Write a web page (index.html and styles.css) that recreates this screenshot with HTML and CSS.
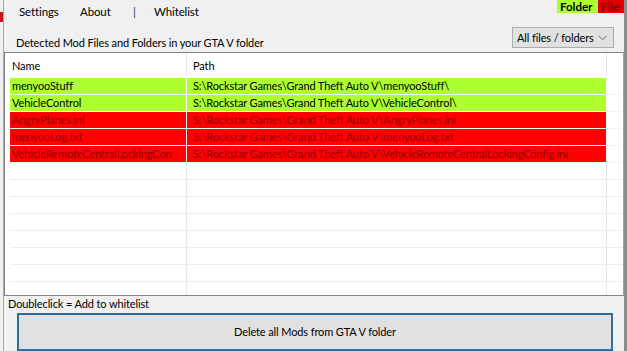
FILE: index.html
```html
<!DOCTYPE html>
<html>
<head>
<meta charset="utf-8">
<link rel="stylesheet" href="styles.css">
</head>
<body>
<div class="window">
  <div class="edge-left"><span class="red-mark"></span></div>
  <div class="main">
    <div class="menubar">
      <span class="menu-item w-settings">Settings</span>
      <span class="menu-item w-about">About</span>
      <span class="menu-item w-sep">|</span>
      <span class="menu-item">Whitelist</span>
      <div class="legend"><span class="lg-folder">Folder</span><span class="lg-file">File</span></div>
    </div>
    <div class="toolbar">
      <span class="caption">Detected Mod Files and Folders in your GTA V folder</span>
      <div class="select">
        <span class="select-text">All files / folders</span>
        <svg class="chevron" width="9" height="6" viewBox="0 0 9 6"><path d="M0.5 0.8 L4.5 4.8 L8.5 0.8" fill="none" stroke="#6d6d6d" stroke-width="1"/></svg>
      </div>
    </div>
    <div class="list">
      <div class="row header"><div class="c1">Name</div><div class="c2">Path</div><div class="c3"></div></div>
      <div class="row folder"><div class="c1">menyooStuff</div><div class="c2">S:\Rockstar Games\Grand Theft Auto V\menyooStuff\</div><div class="c3"></div></div>
      <div class="row folder"><div class="c1">VehicleControl</div><div class="c2">S:\Rockstar Games\Grand Theft Auto V\VehicleControl\</div><div class="c3"></div></div>
      <div class="row file"><div class="c1">AngryPlanes.ini</div><div class="c2">S:\Rockstar Games\Grand Theft Auto V\AngryPlanes.ini</div><div class="c3"></div></div>
      <div class="row file"><div class="c1">menyooLog.txt</div><div class="c2">S:\Rockstar Games\Grand Theft Auto V\menyooLog.txt</div><div class="c3"></div></div>
      <div class="row file"><div class="c1">VehicleRemoteCentralLockingCon</div><div class="c2">S:\Rockstar Games\Grand Theft Auto V\VehicleRemoteCentralLockingConfig.ini</div><div class="c3"></div></div>
      <div class="row"><div class="c1"></div><div class="c2"></div><div class="c3"></div></div>
      <div class="row"><div class="c1"></div><div class="c2"></div><div class="c3"></div></div>
      <div class="row"><div class="c1"></div><div class="c2"></div><div class="c3"></div></div>
      <div class="row"><div class="c1"></div><div class="c2"></div><div class="c3"></div></div>
      <div class="row"><div class="c1"></div><div class="c2"></div><div class="c3"></div></div>
      <div class="row"><div class="c1"></div><div class="c2"></div><div class="c3"></div></div>
      <div class="row"><div class="c1"></div><div class="c2"></div><div class="c3"></div></div>
      <div class="row"><div class="c1"></div><div class="c2"></div><div class="c3"></div></div>
    </div>
    <div class="hint">Doubleclick = Add to whitelist</div>
    <div class="btn-wrap"><button class="btn">Delete all Mods from GTA V folder</button></div>
  </div>
  <div class="edge-right"></div>
</div>
</body>
</html>
```
FILE: styles.css
```css
html, body {
  margin: 0;
  padding: 0;
  background: #f0f0f0;
}
body {
  font-family: Lato, "Liberation Sans", sans-serif;
  font-size: 11px;
  letter-spacing: -0.12px;
  color: #000;
}
.window {
  width: 627px;
  height: 351px;
  display: flex;
  overflow: hidden;
  background: #f0f0f0;
}
.edge-left {
  width: 3px;
  flex: none;
  display: flex;
  flex-direction: column;
}
.red-mark {
  display: block;
  margin-top: 12px;
  height: 10px;
  width: 3px;
  background: #c4161c;
}
.main {
  flex: 1;
  min-width: 0;
  border-left: 1px solid #a9a9a9;
  display: flex;
  flex-direction: column;
}
.edge-right {
  width: 3px;
  flex: none;
  background: #8c8c8c;
}
.menubar {
  height: 24px;
  display: flex;
  align-items: flex-start;
  padding-left: 15px;
  font-size: 11.5px;
}
.menu-item {
  line-height: 24px;
  flex: none;
}
.w-settings { width: 61px; }
.w-about { width: 53px; }
.w-sep { width: 21px; color: #333; }
.legend {
  margin-left: auto;
  display: flex;
  font-weight: bold;
  line-height: 13px;
  height: 13px;
  font-size: 11.5px;
  letter-spacing: 0;
}
.lg-folder {
  background: #adff2f;
  padding: 0 3px;
  width: 35px;
}
.lg-file {
  background: #e00000;
  color: #8c0000;
  padding: 0 3px 0 3px;
  width: 20px;
}
.toolbar {
  height: 28px;
  display: flex;
  align-items: flex-start;
  padding-left: 12px;
  padding-right: 10px;
}
.caption {
  margin-top: 11px;
  line-height: 15px;
  white-space: nowrap;
}
.select {
  margin-left: auto;
  margin-top: 3px;
  width: 100px;
  height: 19px;
  border: 1px solid #adadad;
  background: #e1e1e1;
  display: flex;
  align-items: center;
  box-sizing: content-box;
  white-space: nowrap;
}
.select-text {
  padding-left: 4px;
  flex: 1;
  line-height: 19px;
}
.chevron {
  margin-right: 6px;
  margin-top: 1px;
}
.list {
  height: 242px;
  border: 1px solid #828282;
  border-right-color: #a0a0a0;
  background: #fff;
  overflow: hidden;
  padding-left: 5px;
}
.row {
  display: flex;
  height: 16px;
  border-bottom: 1px solid #ededed;
  line-height: 16px;
  white-space: nowrap;
}
.row .c1 {
  width: 174px;
  padding-left: 2px;
  border-right: 1px solid #e6e6e6;
  overflow: hidden;
  flex: none;
}
.row .c2 {
  width: 413px;
  padding-left: 6px;
  border-right: 1px solid #e6e6e6;
  overflow: hidden;
  flex: none;
}
.row .c3 {
  flex: 1;
}
.row.header {
  height: 25px;
  line-height: 25px;
  border-bottom: none;
}
.row.header .c1, .row.header .c2 {
  border-right-color: #e8e8e8;
}
.row.folder .c1, .row.folder .c2 {
  background: #adff2f;
  color: #000;
  border-right-color: #fff;
}
.row.file .c1, .row.file .c2 {
  background: #ff0000;
  color: #950000;
  border-right-color: #fff;
}
.row.folder, .row.file {
  border-bottom-color: #f4f4f4;
}
.hint {
  height: 17px;
  line-height: 15px;
  padding-left: 4px;
}
.btn-wrap {
  padding-left: 13px;
  padding-right: 11px;
}
.btn {
  display: block;
  width: 596px;
  height: 38px;
  margin: 0;
  padding: 0;
  background: #e1e1e1;
  border: 2px solid #2e6ca2;
  font-family: Lato, "Liberation Sans", sans-serif;
  font-size: 11px;
  letter-spacing: -0.12px;
  color: #000;
  text-align: center;
  line-height: 32px;
}
```
